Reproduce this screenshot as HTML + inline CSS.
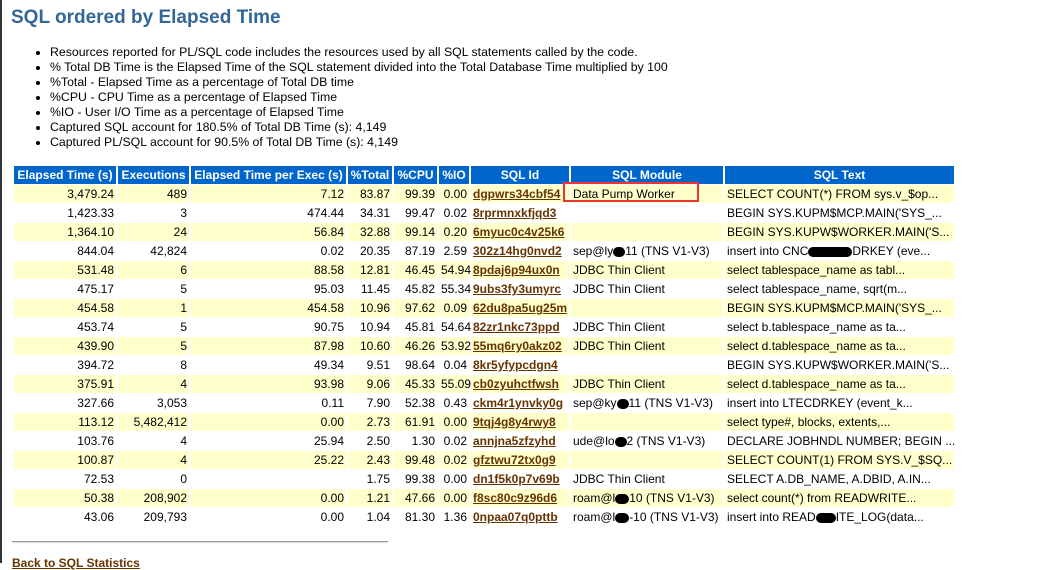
<!DOCTYPE html>
<html><head><meta charset="utf-8"><style>
body{margin:0;width:1044px;height:563px;overflow:hidden;background:#fff;font-family:"Liberation Sans",Arial,sans-serif;font-size:12px;color:#000;position:relative;border-left:2px solid #333;box-sizing:border-box}
h1{position:absolute;left:9px;top:7px;margin:0;font-size:19px;color:#336699;font-weight:bold}
ul{position:absolute;left:8px;top:45px;margin:0;padding-left:40px;line-height:15px;font-size:12.3px}
table{position:absolute;left:10px;top:165px;border-spacing:2px 1px;table-layout:fixed;width:944px}
th{background:#0066CC;color:#fff;font-weight:bold;height:18px;padding:0 2px;white-space:nowrap;overflow:hidden}
td{height:18px;padding:0 2px;white-space:nowrap;overflow:visible;text-align:right}
tr.y td{background:#FFFFCC}
td.l{text-align:left}
td a{color:#663300;font-weight:bold;text-decoration:underline}
.red{position:absolute;left:561px;top:182px;width:132px;height:16px;border:2px solid #e33}
hr{position:absolute;left:10px;top:541px;width:376px;margin:0;border:0;border-top:1px solid #999;border-bottom:1px solid #ddd}
.back{position:absolute;left:10px;top:556px;color:#663300;font-weight:bold;text-decoration:underline}
.blob{display:inline-block;width:18px;height:10px;background:#000;border-radius:6px;vertical-align:middle}
</style></head><body>
<h1>SQL ordered by Elapsed Time</h1>
<ul>
<li>Resources reported for PL/SQL code includes the resources used by all SQL statements called by the code.</li>
<li>% Total DB Time is the Elapsed Time of the SQL statement divided into the Total Database Time multiplied by 100</li>
<li>%Total - Elapsed Time as a percentage of Total DB time</li>
<li>%CPU - CPU Time as a percentage of Elapsed Time</li>
<li>%IO - User I/O Time as a percentage of Elapsed Time</li>
<li>Captured SQL account for 180.5% of Total DB Time (s): 4,149</li>
<li>Captured PL/SQL account for 90.5% of Total DB Time (s): 4,149</li>
</ul>
<table>
<colgroup><col style="width:102px"><col style="width:71px"><col style="width:155px"><col style="width:44px"><col style="width:43px"><col style="width:30px"><col style="width:98px"><col style="width:152px"><col style="width:229px"></colgroup>
<tr><th>Elapsed Time (s)</th><th>Executions</th><th>Elapsed Time per Exec (s)</th><th>%Total</th><th>%CPU</th><th>%IO</th><th>SQL Id</th><th>SQL Module</th><th>SQL Text</th></tr>
<tr class="y"><td>3,479.24</td><td>489</td><td>7.12</td><td>83.87</td><td>99.39</td><td>0.00</td><td class="l"><a>dgpwrs34cbf54</a></td><td class="l">Data Pump Worker</td><td class="l">SELECT COUNT(*) FROM sys.v_$op...</td></tr>
<tr><td>1,423.33</td><td>3</td><td>474.44</td><td>34.31</td><td>99.47</td><td>0.02</td><td class="l"><a>8rprmnxkfjqd3</a></td><td class="l"></td><td class="l">BEGIN SYS.KUPM$MCP.MAIN('SYS_...</td></tr>
<tr class="y"><td>1,364.10</td><td>24</td><td>56.84</td><td>32.88</td><td>99.14</td><td>0.20</td><td class="l"><a>6myuc0c4v25k6</a></td><td class="l"></td><td class="l">BEGIN SYS.KUPW$WORKER.MAIN('S...</td></tr>
<tr><td>844.04</td><td>42,824</td><td>0.02</td><td>20.35</td><td>87.19</td><td>2.59</td><td class="l"><a>302z14hg0nvd2</a></td><td class="l">sep@ly<span class="blob" style="width:12px"></span>11 (TNS V1-V3)</td><td class="l">insert into CNC<span class="blob" style="width:44px"></span>DRKEY (eve...</td></tr>
<tr class="y"><td>531.48</td><td>6</td><td>88.58</td><td>12.81</td><td>46.45</td><td>54.94</td><td class="l"><a>8pdaj6p94ux0n</a></td><td class="l">JDBC Thin Client</td><td class="l">select tablespace_name as tabl...</td></tr>
<tr><td>475.17</td><td>5</td><td>95.03</td><td>11.45</td><td>45.82</td><td>55.34</td><td class="l"><a>9ubs3fy3umyrc</a></td><td class="l">JDBC Thin Client</td><td class="l">select tablespace_name, sqrt(m...</td></tr>
<tr class="y"><td>454.58</td><td>1</td><td>454.58</td><td>10.96</td><td>97.62</td><td>0.09</td><td class="l"><a>62du8pa5ug25m</a></td><td class="l"></td><td class="l">BEGIN SYS.KUPM$MCP.MAIN('SYS_...</td></tr>
<tr><td>453.74</td><td>5</td><td>90.75</td><td>10.94</td><td>45.81</td><td>54.64</td><td class="l"><a>82zr1nkc73ppd</a></td><td class="l">JDBC Thin Client</td><td class="l">select b.tablespace_name as ta...</td></tr>
<tr class="y"><td>439.90</td><td>5</td><td>87.98</td><td>10.60</td><td>46.26</td><td>53.92</td><td class="l"><a>55mq6ry0akz02</a></td><td class="l">JDBC Thin Client</td><td class="l">select d.tablespace_name as ta...</td></tr>
<tr><td>394.72</td><td>8</td><td>49.34</td><td>9.51</td><td>98.64</td><td>0.04</td><td class="l"><a>8kr5yfypcdgn4</a></td><td class="l"></td><td class="l">BEGIN SYS.KUPW$WORKER.MAIN('S...</td></tr>
<tr class="y"><td>375.91</td><td>4</td><td>93.98</td><td>9.06</td><td>45.33</td><td>55.09</td><td class="l"><a>cb0zyuhctfwsh</a></td><td class="l">JDBC Thin Client</td><td class="l">select d.tablespace_name as ta...</td></tr>
<tr><td>327.66</td><td>3,053</td><td>0.11</td><td>7.90</td><td>52.38</td><td>0.43</td><td class="l"><a>ckm4r1ynvky0g</a></td><td class="l">sep@ky<span class="blob" style="width:12px"></span>11 (TNS V1-V3)</td><td class="l">insert into LTECDRKEY (event_k...</td></tr>
<tr class="y"><td>113.12</td><td>5,482,412</td><td>0.00</td><td>2.73</td><td>61.91</td><td>0.00</td><td class="l"><a>9tqj4g8y4rwy8</a></td><td class="l"></td><td class="l">select type#, blocks, extents,...</td></tr>
<tr><td>103.76</td><td>4</td><td>25.94</td><td>2.50</td><td>1.30</td><td>0.02</td><td class="l"><a>annjna5zfzyhd</a></td><td class="l">ude@lo<span class="blob" style="width:12px"></span>2 (TNS V1-V3)</td><td class="l">DECLARE JOBHNDL NUMBER; BEGIN ...</td></tr>
<tr class="y"><td>100.87</td><td>4</td><td>25.22</td><td>2.43</td><td>99.48</td><td>0.02</td><td class="l"><a>gfztwu72tx0g9</a></td><td class="l"></td><td class="l">SELECT COUNT(1) FROM SYS.V_$SQ...</td></tr>
<tr><td>72.53</td><td>0</td><td></td><td>1.75</td><td>99.38</td><td>0.00</td><td class="l"><a>dn1f5k0p7v69b</a></td><td class="l">JDBC Thin Client</td><td class="l">SELECT A.DB_NAME, A.DBID, A.IN...</td></tr>
<tr class="y"><td>50.38</td><td>208,902</td><td>0.00</td><td>1.21</td><td>47.66</td><td>0.00</td><td class="l"><a>f8sc80c9z96d6</a></td><td class="l">roam@l<span class="blob" style="width:14px"></span>10 (TNS V1-V3)</td><td class="l">select count(*) from READWRITE...</td></tr>
<tr><td>43.06</td><td>209,793</td><td>0.00</td><td>1.04</td><td>81.30</td><td>1.36</td><td class="l"><a>0npaa07q0pttb</a></td><td class="l">roam@l<span class="blob" style="width:14px"></span>-10 (TNS V1-V3)</td><td class="l">insert into READ<span class="blob" style="width:20px"></span>ITE_LOG(data...</td></tr>
</table>
<div class="red"></div>
<hr>
<div class="back">Back to SQL Statistics</div>
</body></html>
